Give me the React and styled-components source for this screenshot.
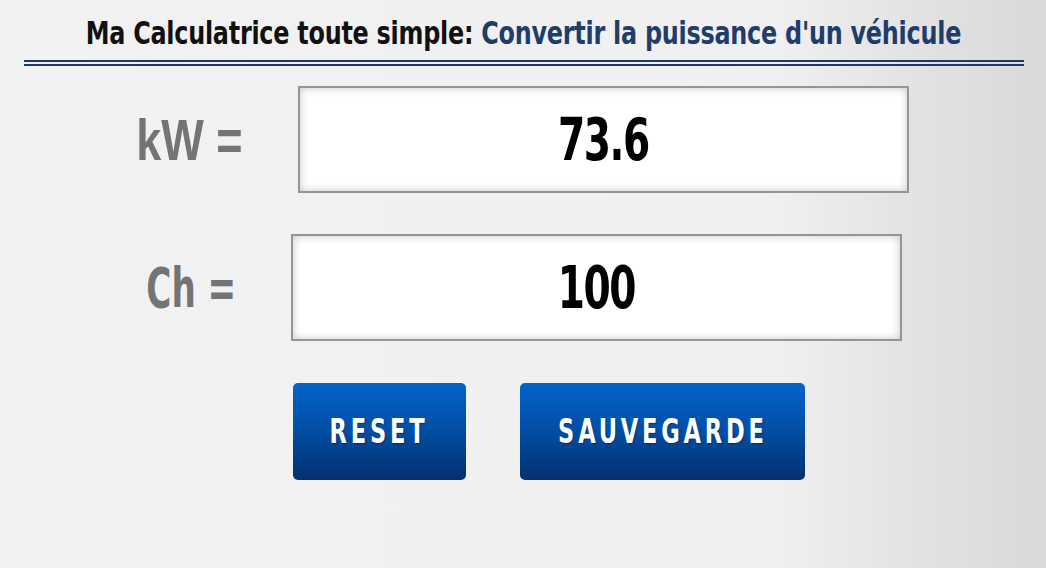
import React from "react";
import styled, { createGlobalStyle } from "styled-components";

const GlobalStyle = createGlobalStyle`
  html, body {
    margin: 0;
    padding: 0;
  }
  body {
    width: 1046px;
    height: 568px;
    overflow: hidden;
    background: linear-gradient(to right, #f2f2f2 0%, #f0f0f0 74%, #e4e4e4 86%, #d9d9d9 100%);
    font-family: "DejaVu Sans Condensed", "DejaVu Sans", sans-serif;
  }
`;

const Page = styled.div`
  display: flex;
  flex-direction: column;
  height: 568px;
`;

const Header = styled.header`
  display: flex;
  flex-direction: column;
  align-items: center;
  padding-top: 11px;
`;

const Title = styled.h1`
  margin: 0;
  height: 44px;
  line-height: 44px;
  font-size: 32px;
  font-weight: bold;
  color: #111;
  white-space: nowrap;
`;

const TitleText = styled.span`
  display: inline-block;
  transform: scaleX(0.83);
  letter-spacing: -0.3px;
`;

const Sub = styled.span`
  color: #1e3c6c;
`;

const Rule = styled.div`
  align-self: stretch;
  margin: 5px 22px 0 24px;
  height: 2px;
  border-top: 2px solid #1c3a6e;
  border-bottom: 2px solid #1c3a6e;
`;

const Form = styled.main`
  display: flex;
  flex-direction: column;
  gap: 41px;
  padding-top: 20px;
`;

const Row = styled.div`
  display: flex;
  justify-content: center;
  align-items: center;
  gap: 55px;
`;

const Label = styled.div`
  width: ${(p) => p.$w}px;
  display: flex;
  justify-content: flex-end;
  white-space: nowrap;
  color: #747474;
`;

const LabelText = styled.span`
  display: inline-block;
  transform-origin: right center;
  transform: scaleX(${(p) => p.$sx});
  font-family: ${(p) =>
    p.$arial
      ? `"Liberation Sans", Arial, sans-serif`
      : `"DejaVu Sans Condensed", "DejaVu Sans", sans-serif`};
  font-weight: bold;
  font-size: ${(p) => (p.$arial ? 57 : 55)}px;
`;

const Field = styled.div`
  box-sizing: border-box;
  width: 611px;
  height: 107px;
  border: 2px solid #959595;
  background: #fff;
  box-shadow: inset 0 0 9px rgba(0, 0, 0, 0.22);
  display: flex;
  align-items: center;
  justify-content: center;
`;

const Value = styled.span`
  font-size: 58px;
  font-weight: bold;
  color: #000;
  display: inline-block;
  transform: scaleX(0.75);
  letter-spacing: -2px;
`;

const Buttons = styled.div`
  display: flex;
  justify-content: center;
  gap: 54px;
  padding-left: 52px;
  margin-top: 1px;
`;

const Button = styled.button`
  box-sizing: border-box;
  width: ${(p) => p.$w}px;
  height: 97px;
  border: none;
  border-radius: 5px;
  background: linear-gradient(to bottom, #0164ca 0%, #0250a8 45%, #03306e 100%);
  color: #fff;
  font-family: "DejaVu Sans Condensed", "DejaVu Sans", sans-serif;
  font-weight: bold;
  font-size: 33px;
  padding: 0;
`;

const ButtonText = styled.span`
  display: inline-block;
  transform: scaleX(0.76);
  letter-spacing: 5px;
  text-shadow: 1px 1px 1px rgba(0, 0, 0, 0.35);
`;

export default function App() {
  return (
    <Page>
      <GlobalStyle />
      <Header>
        <Title>
          <TitleText>
            Ma Calculatrice toute simple: <Sub>Convertir la puissance d'un véhicule</Sub>
          </TitleText>
        </Title>
        <Rule />
      </Header>
      <Form>
        <Row>
          <Label $w={105}>
            <LabelText $arial $sx={0.79}>kW =</LabelText>
          </Label>
          <Field>
            <Value>73.6</Value>
          </Field>
        </Row>
        <Row>
          <Label $w={92}>
            <LabelText $sx={0.69}>Ch =</LabelText>
          </Label>
          <Field>
            <Value>100</Value>
          </Field>
        </Row>
        <Buttons>
          <Button $w={173}>
            <ButtonText>RESET</ButtonText>
          </Button>
          <Button $w={285}>
            <ButtonText>SAUVEGARDE</ButtonText>
          </Button>
        </Buttons>
      </Form>
    </Page>
  );
}
